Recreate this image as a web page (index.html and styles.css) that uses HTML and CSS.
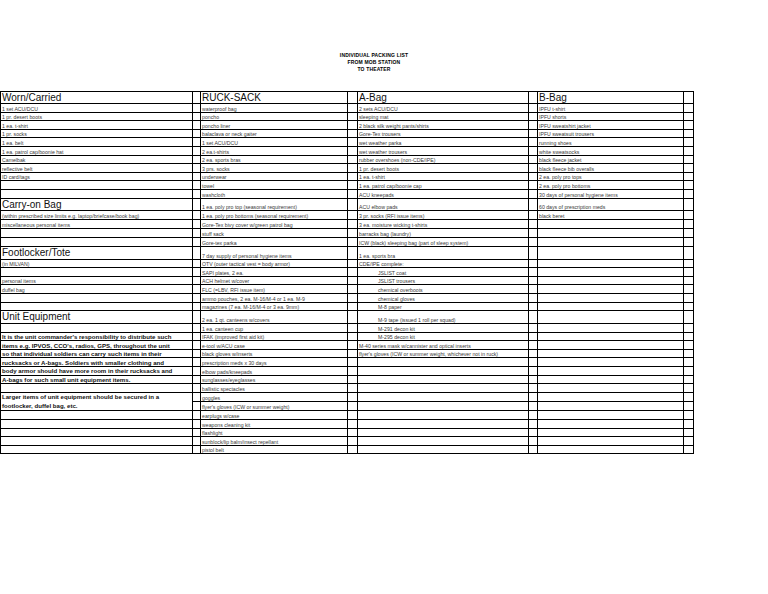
FILE: index.html
```html
<!DOCTYPE html>
<html>
<head>
<meta charset="utf-8">
<title>Individual Packing List</title>
<link rel="stylesheet" href="styles.css">
</head>
<body>
<div class="title">
  <div>INDIVIDUAL PACKING LIST</div>
  <div>FROM MOB STATION</div>
  <div>TO THEATER</div>
</div>
<table class="sheet">
  <colgroup>
    <col class="c-main1"><col class="c-n1"><col class="c-ruck"><col class="c-n2"><col class="c-abag"><col class="c-n3"><col class="c-bbag"><col class="c-n4">
  </colgroup>
  <tr class="hrow"><td class="hd">Worn/Carried</td><td></td><td class="hd">RUCK-SACK</td><td></td><td class="hd">A-Bag</td><td></td><td class="hd">B-Bag</td><td></td></tr>
  <tr class="r"><td>1 set ACU/DCU</td><td></td><td>waterproof bag</td><td></td><td>2 sets ACU/DCU</td><td></td><td>IPFU t-shirt</td><td></td></tr>
  <tr class="r"><td>1 pr. desert boots</td><td></td><td>poncho</td><td></td><td>sleeping mat</td><td></td><td>IPFU shorts</td><td></td></tr>
  <tr class="r"><td>1 ea. t-shirt</td><td></td><td>poncho liner</td><td></td><td>2 black silk weight pants/shirts</td><td></td><td>IPFU sweatshirt jacket</td><td></td></tr>
  <tr class="r"><td>1 pr. socks</td><td></td><td>balaclava or neck gaiter</td><td></td><td>Gore-Tex trousers</td><td></td><td>IPFU sweatsuit trousers</td><td></td></tr>
  <tr class="r"><td>1 ea. belt</td><td></td><td>1 set ACU/DCU</td><td></td><td>wet weather parka</td><td></td><td>running shoes</td><td></td></tr>
  <tr class="r"><td>1 ea. patrol cap/boonie hat</td><td></td><td>2 ea.t-shirts</td><td></td><td>wet weather trousers</td><td></td><td>white sweatsocks</td><td></td></tr>
  <tr class="r"><td>Camelbak</td><td></td><td>2 ea. sports bras</td><td></td><td>rubber overshoes (non-CDE/IPE)</td><td></td><td>black fleece jacket</td><td></td></tr>
  <tr class="r"><td>reflective belt</td><td></td><td>3 prs. socks</td><td></td><td>1 pr. desert boots</td><td></td><td>black fleece bib overalls</td><td></td></tr>
  <tr class="r"><td>ID card/tags</td><td></td><td>underwear</td><td></td><td>1 ea. t-shirt</td><td></td><td>2 ea. poly pro tops</td><td></td></tr>
  <tr class="r"><td></td><td></td><td>towel</td><td></td><td>1 ea. patrol cap/boonie cap</td><td></td><td>2 ea. poly pro bottoms</td><td></td></tr>
  <tr class="r"><td></td><td></td><td>washcloth</td><td></td><td>ACU kneepads</td><td></td><td>30 days of personal hygiene items</td><td></td></tr>
  <tr class="t11"><td class="hd">Carry-on Bag</td><td></td><td>1 ea. poly pro top (seasonal requirement)</td><td></td><td>ACU elbow pads</td><td></td><td>60 days of prescription meds</td><td></td></tr>
  <tr class="r9"><td>(within prescribed size limits e.g. laptop/briefcase/book bag)</td><td></td><td>1 ea. poly pro bottoms (seasonal requirement)</td><td></td><td>3 pr. socks (RFI issue items)</td><td></td><td>black beret</td><td></td></tr>
  <tr class="r9"><td>miscellaneous personal items</td><td></td><td>Gore-Tex bivy cover w/green patrol bag</td><td></td><td>3 ea. moisture wicking t-shirts</td><td></td><td></td><td></td></tr>
  <tr class="r9"><td></td><td></td><td>stuff sack</td><td></td><td>barracks bag (laundry)</td><td></td><td></td><td></td></tr>
  <tr class="r9"><td></td><td></td><td>Gore-tex parka</td><td></td><td>ICW (black) sleeping bag (part of sleep system)</td><td></td><td></td><td></td></tr>
  <tr class="t13"><td class="hd">Footlocker/Tote</td><td></td><td>7 day supply of personal hygiene items</td><td></td><td>1 ea. sports bra</td><td></td><td></td><td></td></tr>
  <tr class="r"><td>(in MILVAN)</td><td></td><td>OTV (outer tactical vest = body armor)</td><td></td><td>CDE/IPE complete:</td><td></td><td></td><td></td></tr>
  <tr class="r"><td></td><td></td><td>SAPI plates, 2 ea.</td><td></td><td class="ind">JSLIST coat</td><td></td><td></td><td></td></tr>
  <tr class="r"><td>personal items</td><td></td><td>ACH helmet w/cover</td><td></td><td class="ind">JSLIST trousers</td><td></td><td></td><td></td></tr>
  <tr class="r"><td>duffel bag</td><td></td><td>FLC (=LBV, RFI issue item)</td><td></td><td class="ind">chemical overboots</td><td></td><td></td><td></td></tr>
  <tr class="r"><td></td><td></td><td>ammo pouches, 2 ea. M-16/M-4 or 1 ea. M-9</td><td></td><td class="ind">chemical gloves</td><td></td><td></td><td></td></tr>
  <tr class="r"><td></td><td></td><td>magazines (7 ea. M-16/M-4 or 3 ea. 9mm)</td><td></td><td class="ind">M-8 paper</td><td></td><td></td><td></td></tr>
  <tr class="t13"><td class="hd hi">Unit Equipment</td><td></td><td>2 ea. 1 qt. canteens w/covers</td><td></td><td class="ind">M-9 tape (issued 1 roll per squad)</td><td></td><td></td><td></td></tr>
  <tr class="r"><td></td><td></td><td>1 ea. canteen cup</td><td></td><td class="ind">M-291 decon kit</td><td></td><td></td><td></td></tr>
  <tr class="r"><td class="note">It is the unit commander's responsibility to distribute such</td><td></td><td>IFAK (improved first aid kit)</td><td></td><td class="ind">M-295 decon kit</td><td></td><td></td><td></td></tr>
  <tr class="r"><td class="note">items e.g. IPVOS, CCO's, radios, GPS, throughout the unit</td><td></td><td>e-tool w/ACU case</td><td></td><td>M-40 series mask w/cannister and optical inserts</td><td></td><td></td><td></td></tr>
  <tr class="r"><td class="note">so that individual soldiers can carry such items in their</td><td></td><td>black gloves w/inserts</td><td></td><td>flyer's gloves (ICW or summer weight, whichever not in ruck)</td><td></td><td></td><td></td></tr>
  <tr class="r"><td class="note">rucksacks or A-bags. Soldiers with smaller clothing and</td><td></td><td>prescription meds x 30 days</td><td></td><td></td><td></td><td></td><td></td></tr>
  <tr class="r"><td class="note">body armor should have more room in their rucksacks and</td><td></td><td>elbow pads/kneepads</td><td></td><td></td><td></td><td></td><td></td></tr>
  <tr class="r"><td class="note">A-bags for such small unit equipment items.</td><td></td><td>sunglasses/eyeglasses</td><td></td><td></td><td></td><td></td><td></td></tr>
  <tr class="r"><td></td><td></td><td>ballistic spectacles</td><td></td><td></td><td></td><td></td><td></td></tr>
  <tr class="r"><td class="note two" rowspan="2">Larger items of unit equipment should be secured in a<br>footlocker, duffel bag, etc.</td><td></td><td>goggles</td><td></td><td></td><td></td><td></td><td></td></tr>
  <tr class="r"><td></td><td>flyer's gloves (ICW or summer weight)</td><td></td><td></td><td></td><td></td><td></td></tr>
  <tr class="r"><td></td><td></td><td>earplugs w/case</td><td></td><td></td><td></td><td></td><td></td></tr>
  <tr class="r"><td></td><td></td><td>weapons cleaning kit</td><td></td><td></td><td></td><td></td><td></td></tr>
  <tr class="r"><td></td><td></td><td>flashlight</td><td></td><td></td><td></td><td></td><td></td></tr>
  <tr class="r"><td></td><td></td><td>sunblock/lip balm/insect repellant</td><td></td><td></td><td></td><td></td><td></td></tr>
  <tr class="r"><td></td><td></td><td>pistol belt</td><td></td><td></td><td></td><td></td><td></td></tr>
</table>
</body>
</html>
```
FILE: styles.css
```css
html, body {
  margin: 0;
  padding: 0;
  background: #ffffff;
}

body {
  font-family: "Liberation Sans", Arial, sans-serif;
  color: #111;
}

.title {
  width: 748px;
  margin-top: 52px;
  text-align: center;
  font-weight: bold;
  font-size: 5px;
  line-height: 7px;
  letter-spacing: 0.15px;
  color: #000;
}

.sheet {
  margin-top: 18px;
  width: 693px;
  table-layout: fixed;
  border-collapse: collapse;
}

.c-main1 { width: 192px; }
.c-n1 { width: 8px; }
.c-ruck { width: 147px; }
.c-n2 { width: 10px; }
.c-abag { width: 171px; }
.c-n3 { width: 9px; }
.c-bbag { width: 146px; }
.c-n4 { width: 10px; }

.sheet td {
  border: 1px solid #000;
  padding: 0 0 0 1px;
  font-size: 5.2px;
  line-height: 6px;
  white-space: nowrap;
  overflow: visible;
  vertical-align: bottom;
  color: #3a3a3a;
}

.hrow { height: 12px; }
.r { height: 8.6px; }
.r9 { height: 9px; }
.t11 { height: 11px; }
.t13 { height: 13px; }

.sheet td.hd {
  font-size: 10px;
  line-height: 11px;
  color: #111;
  padding-left: 1px;
  vertical-align: middle;
}

.sheet td.hd.hi {
  vertical-align: top;
}

.sheet td.ind {
  padding-left: 20px;
}

.sheet td.note {
  font-weight: bold;
  font-size: 6.1px;
  line-height: 7px;
  color: #111;
  vertical-align: middle;
}

.sheet td.note.two {
  line-height: 8.8px;
}
```
